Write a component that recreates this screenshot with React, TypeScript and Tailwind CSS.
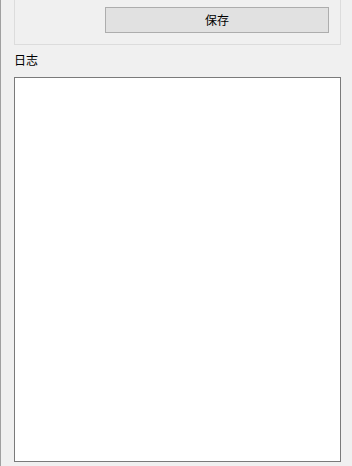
export default function App() {
  return (
    <div
      className="w-[352px] h-[466px] overflow-hidden bg-[#f0f0f0] border-l border-[#a0a0a0] text-[12px] text-black"
      style={{ fontFamily: '"Noto Sans CJK SC", "Noto Sans", sans-serif' }}
    >
      {/* settings group (top is scrolled out of view) */}
      <div className="ml-[13px] w-[327px] h-[45px] border-x border-b border-[#dcdcdc] pt-[7px] pl-[90px]">
        <button className="w-[224px] h-[26px] border border-[#adadad] bg-[#e1e1e1] leading-[24px] text-[12px]">
          保存
        </button>
      </div>

      <div className="ml-[13px] mt-[7px] h-[16px] leading-[16px]">日志</div>

      <div className="ml-[13px] mt-[9px] w-[327px] h-[385px] border border-[#7a7a7a] bg-white" />
    </div>
  );
}
